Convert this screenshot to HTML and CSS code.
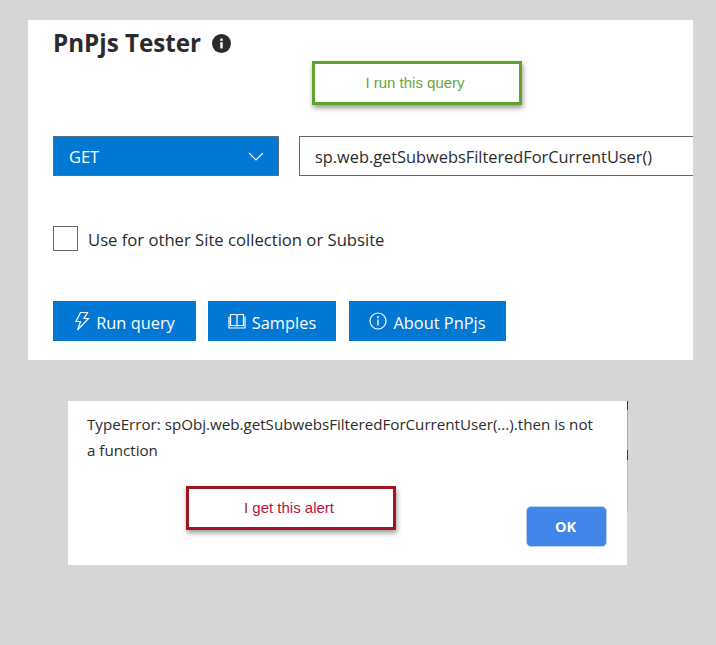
FILE: index.html
```html
<!DOCTYPE html>
<html lang="en">
<head>
    <meta charset="UTF-8">
    <title>PnPjs Tester</title>
    <link rel="stylesheet" href="styles.css">
</head>
<body>

<div class="card">
    <h1 class="title">PnPjs Tester
        <svg class="title-icon" viewBox="0 0 20 20" width="19" height="19">
            <circle cx="10" cy="10" r="10" fill="#2b2b2b"/>
            <rect x="8.7" y="8.6" width="2.6" height="6.6" fill="#fff"/>
            <rect x="8.7" y="4.8" width="2.6" height="2.4" fill="#fff"/>
        </svg>
    </h1>

    <div class="query-row">
        <div class="select">
            <span>GET</span>
            <svg viewBox="0 0 16 9" width="16" height="9">
                <path d="M1 1l7 7 7-7" fill="none" stroke="#fff" stroke-width="1.2"/>
            </svg>
        </div>
        <div class="query-input">sp.web.getSubwebsFilteredForCurrentUser()</div>
    </div>

    <label class="check-row">
        <span class="check-box"></span>
        <span class="check-label">Use for other Site collection or Subsite</span>
    </label>

    <div class="button-row">
        <button class="btn btn-run" type="button">
            <svg viewBox="0 0 16 20" width="16" height="20">
                <path d="M6.5 1.5h7l-3.500 6h4.500L3.500 19l3-8.500H2z" fill="none" stroke="#fff" stroke-width="1.200"/>
            </svg>
            <span class="btn-label">Run query</span>
        </button>
        <button class="btn btn-samples" type="button">
            <svg viewBox="0 0 18 16" width="18" height="16">
                <path d="M2.500 1.500h4.500q2 0 2 1.500v10.500q0-1-2-1H2.500zM15.500 1.500H11q-2 0-2 1.500v10.500q0-1 2-1h4.500z" fill="none" stroke="#fff" stroke-width="1.200"/>
                <path d="M1 3.500v11.500h16V3.500" fill="none" stroke="#fff" stroke-width="1.200"/>
            </svg>
            <span class="btn-label">Samples</span>
        </button>
        <button class="btn btn-about" type="button">
            <svg viewBox="0 0 18 18" width="18" height="18">
                <circle cx="9" cy="9" r="8" fill="none" stroke="#fff" stroke-width="1.200"/>
                <path d="M9 7.500v6" stroke="#fff" stroke-width="1.300"/>
                <circle cx="9" cy="5" r="1" fill="#fff"/>
            </svg>
            <span class="btn-label">About PnPjs</span>
        </button>
    </div>
</div>

<div class="alert">
    <p class="alert-text">TypeError: spObj.web.getSubwebsFilteredForCurrentUser(...).then is not a function</p>
    <div class="alert-actions">
        <button class="ok-btn" type="button">OK</button>
    </div>
</div>

<div class="note note-green">I run this query</div>
<div class="note note-red">I get this alert</div>

</body>
</html>
```

FILE: styles.css
```css
html, body {
    margin: 0;
    height: 645px;
    overflow: hidden;
}
body {
    position: relative;
    background: #d6d6d6;
    padding: 20px 0 0 28px;
    box-sizing: border-box;
    font-family: "Open Sans", "Noto Sans", sans-serif;
    color: #2b2b2b;
}
.card {
    width: 665px;
    height: 340px;
    box-sizing: border-box;
    padding: 5px 0 0 25px;
    background: white;
    overflow: hidden;
}
.title {
    display: flex;
    align-items: center;
    gap: 11px;
    margin: 0;
    height: 36px;
    font-size: 24.2px;
    font-weight: 700;
    line-height: 36px;
}
.query-row {
    display: flex;
    gap: 20px;
    margin-top: 75px;
}
.select {
    flex: none;
    display: flex;
    align-items: center;
    justify-content: space-between;
    width: 226px;
    height: 40px;
    box-sizing: border-box;
    padding: 0 14px 0 15px;
    background: #0078d4;
    border: 1px solid #5f6b76;
    color: white;
    font-size: 16.4px;
}
.select span {
    padding-top: 1px;
}
.query-input {
    flex: none;
    width: 420px;
    height: 40px;
    box-sizing: border-box;
    padding: 1px 0 0 15px;
    border: 1px solid #666;
    font-size: 16.35px;
    line-height: 38px;
}
.check-row {
    display: flex;
    align-items: center;
    gap: 10px;
    margin-top: 50px;
}
.check-label {
    padding-top: 2px;
    font-size: 16.65px;
}
.check-box {
    width: 25px;
    height: 25px;
    box-sizing: border-box;
    border: 1px solid #666;
}
.button-row {
    display: flex;
    margin-top: 50px;
}
.btn {
    display: flex;
    align-items: center;
    justify-content: center;
    gap: 6px;
    height: 40px;
    padding: 0;
    background: #0078d4;
    border: none;
    color: white;
    font-family: inherit;
    font-size: 16.4px;
}
.btn-label {
    padding-top: 2px;
}
.btn-run {
    width: 143px;
}
.btn-samples {
    width: 128px;
    margin-left: 12px;
}
.btn-about {
    width: 157px;
    margin-left: 13px;
}
.alert {
    position: relative;
    width: 559px;
    height: 164px;
    box-sizing: border-box;
    margin: 41px 0 0 40px;
    padding: 10px 20px 18px 19px;
    background: white;
    display: flex;
    flex-direction: column;
    justify-content: space-between;
}
.alert::after {
    content: "";
    position: absolute;
    top: 0;
    right: -1px;
    width: 1px;
    height: 110px;
    background: linear-gradient(#1f3f5f 0 9px, #a9a9a9 9px 49px, #1f3f5f 49px 59px, #bdbdbd 59px);
}
.alert-text {
    margin: 0;
    max-width: 510px;
    font-size: 15.15px;
    line-height: 26px;
}
.alert-actions {
    display: flex;
    justify-content: flex-end;
}
.ok-btn {
    width: 81px;
    height: 41px;
    padding: 0 2px 0 0;
    background: #4285e8;
    border: 1px solid #b9d3f7;
    border-radius: 5px;
    color: white;
    font-family: inherit;
    font-size: 14.5px;
    font-weight: 700;
}
.note {
    position: absolute;
    width: 210px;
    height: 44px;
    box-sizing: border-box;
    padding-right: 4px;
    background: white;
    box-shadow: 1px 3px 5px rgba(0, 0, 0, 0.4);
    font-family: "Liberation Sans", Arial, sans-serif;
    font-size: 15px;
    line-height: 37px;
    text-align: center;
}
.note-green {
    left: 312px;
    top: 61px;
    border: 3px solid #5fa22d;
    color: #6aa53c;
}
.note-red {
    left: 186px;
    top: 486px;
    border: 3px solid #a0161f;
    color: #b3153a;
}
```
